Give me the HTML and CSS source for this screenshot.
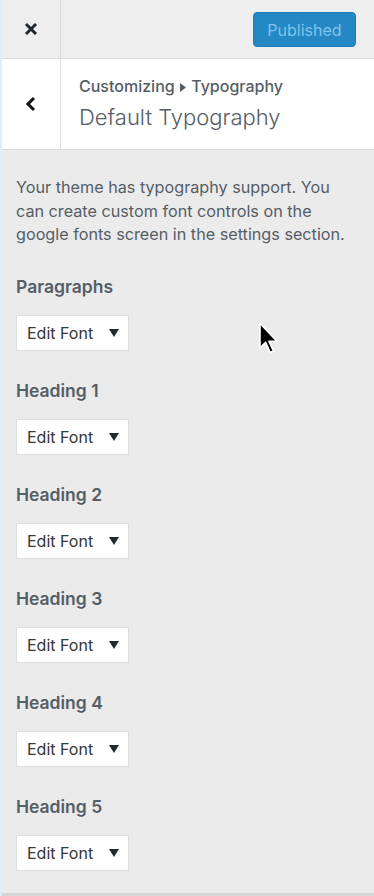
FILE: index.html
```html
<!DOCTYPE html>
<html lang="en">
<head>
  <meta charset="UTF-8">
  <meta name="viewport" content="width=device-width, initial-scale=1.0">
  <title>Default Typography</title>
  <link rel="stylesheet" href="styles.css">
</head>
<body>
  <div class="panel">
    <div class="topbar">
      <button class="close" aria-label="Close">
        <svg width="14" height="14" viewBox="0 0 14 14"><path d="M2 2 L12 12 M12 2 L2 12" stroke="#23282d" stroke-width="3"/></svg>
      </button>
      <button class="publish" disabled>Published</button>
    </div>

    <div class="header">
      <button class="back" aria-label="Back">
        <svg width="12" height="16" viewBox="0 0 12 16"><path d="M9 2 L3 8 L9 14" fill="none" stroke="#111" stroke-width="3"/></svg>
      </button>
      <div class="title">
        <div class="crumbs">Customizing <svg class="caret" width="6" height="9" viewBox="0 0 6 9"><path d="M0 0 L6 4.5 L0 9 Z" fill="#555d66"/></svg> Typography</div>
        <h2>Default Typography</h2>
      </div>
    </div>

    <div class="content">
      <p class="desc">Your theme has typography support. You can create custom font controls on the google fonts screen in the settings section.</p>

      <div class="control">
        <label>Paragraphs</label>
        <div class="select">Edit Font <svg class="arrow" width="10" height="8" viewBox="0 0 10 8"><path d="M0 0 L10 0 L5 8 Z" fill="#23282d"/></svg></div>
      </div>
      <div class="control">
        <label>Heading 1</label>
        <div class="select">Edit Font <svg class="arrow" width="10" height="8" viewBox="0 0 10 8"><path d="M0 0 L10 0 L5 8 Z" fill="#23282d"/></svg></div>
      </div>
      <div class="control">
        <label>Heading 2</label>
        <div class="select">Edit Font <svg class="arrow" width="10" height="8" viewBox="0 0 10 8"><path d="M0 0 L10 0 L5 8 Z" fill="#23282d"/></svg></div>
      </div>
      <div class="control">
        <label>Heading 3</label>
        <div class="select">Edit Font <svg class="arrow" width="10" height="8" viewBox="0 0 10 8"><path d="M0 0 L10 0 L5 8 Z" fill="#23282d"/></svg></div>
      </div>
      <div class="control">
        <label>Heading 4</label>
        <div class="select">Edit Font <svg class="arrow" width="10" height="8" viewBox="0 0 10 8"><path d="M0 0 L10 0 L5 8 Z" fill="#23282d"/></svg></div>
      </div>
      <div class="control">
        <label>Heading 5</label>
        <div class="select">Edit Font <svg class="arrow" width="10" height="8" viewBox="0 0 10 8"><path d="M0 0 L10 0 L5 8 Z" fill="#23282d"/></svg></div>
      </div>
    </div>
    <div class="footer"></div>

    <!-- mouse pointer over the panel -->
    <svg class="cursor" width="24" height="34" viewBox="0 0 20 30">
      <path d="M2 1 L2 23 L7 18 L11 27 L14 25.5 L10 17 L17 17 Z" fill="#000" stroke="#fff" stroke-width="1.5" stroke-linejoin="round"/>
    </svg>
  </div>
</body>
</html>
```

FILE: styles.css
```css
body {
  margin: 0;
  font-family: Inter, "Noto Sans", sans-serif;
  background: #ebebeb;
  color: #555d66;
}
.panel {
  position: relative;
  width: 374px;
  height: 896px;
  display: flex;
  flex-direction: column;
  border-left: 2px solid #e2eef7;
  box-sizing: border-box;
  overflow: hidden;
}
button {
  font-family: inherit;
  border: none;
  background: none;
  padding: 0;
}
.topbar {
  flex-shrink: 0;
  height: 58px;
  display: flex;
  align-items: center;
  justify-content: space-between;
  background: #eeeeee;
  border-bottom: 1px solid #dddddd;
  margin-left: -2px;
  padding-left: 2px;
}
.close {
  width: 59px;
  height: 58px;
  border-right: 1px solid #dddddd;
  display: flex;
  align-items: center;
  justify-content: center;
}
.publish {
  width: 103px;
  height: 35px;
  margin-right: 18px;
  margin-top: 1px;
  background: #2388c4;
  border: 1px solid #1f7fb8;
  border-radius: 4px;
  color: #82c3ea;
  font-size: 16px;
}
.header {
  flex-shrink: 0;
  height: 90px;
  display: flex;
  background: #ffffff;
  border-bottom: 1px solid #dddddd;
}
.back {
  width: 59px;
  border-right: 1px solid #dddddd;
  display: flex;
  align-items: center;
  justify-content: center;
}
.title {
  padding: 16px 0 0 18px;
}
.crumbs {
  font-size: 16px;
  font-weight: 500;
  color: #555d66;
  line-height: 22px;
}
.caret {
  margin: 0 1px;
}
.title h2 {
  margin: 5px 0 0;
  font-size: 22px;
  font-weight: 300;
  color: #555d66;
  line-height: 30px;
}
.content {
  flex: 1;
  min-height: 0;
  padding: 26px 14px 0 14px;
}
.desc {
  margin: 0 0 28px;
  font-size: 16.2px;
  line-height: 23.5px;
  color: #555d66;
}
.control {
  margin-bottom: 28px;
}
.control label {
  display: block;
  font-size: 17.5px;
  font-weight: 600;
  line-height: 24px;
  margin-bottom: 16px;
  color: #555d66;
}
.select {
  width: 101px;
  height: 34px;
  display: flex;
  align-items: center;
  justify-content: space-between;
  padding: 0 0 0 10px;
  background: #ffffff;
  border: 1px solid #dddddd;
  font-size: 16px;
  color: #32373c;
}
.arrow {
  margin-right: 9px;
}
.footer {
  flex-shrink: 0;
  height: 3px;
  background: #d6d6d6;
}
.cursor {
  position: absolute;
  left: 255px;
  top: 322px;
}
```
